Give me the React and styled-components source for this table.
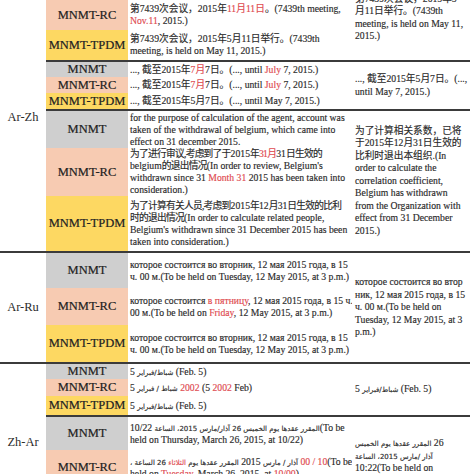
import React from "react";
import styled, { createGlobalStyle } from "styled-components";

const GlobalStyle = createGlobalStyle`
  html, body {
    margin: 0;
    padding: 0;
    background: #fff;
  }
  body {
    width: 474px;
    height: 474px;
    overflow: hidden;
    font-family: "Liberation Serif", "Noto Sans CJK SC", "DejaVu Sans", serif;
  }
`;

const Table = styled.div`
  width: 470px;
  margin-top: -16px;
  display: flex;
  flex-direction: column;
`;

const Group = styled.section`
  display: flex;
  border-bottom: 2px solid #3b3b3b;
`;

const Lang = styled.div`
  width: 46px;
  flex: none;
  display: flex;
  align-items: center;
  justify-content: center;
  font-size: 12.5px;
  color: #2b2b2b;
`;

const Subs = styled.div`
  flex: 1;
  display: flex;
  flex-direction: column;
`;

const Sub = styled.div`
  display: grid;
  grid-template-columns: 82px 224px 1fr;
  grid-template-rows: ${(p) => p.$rows};
  &:not(:last-child) {
    border-bottom: 2px solid #3b3b3b;
  }
`;

const tones = {
  gray: "#cfcfcf",
  peach: "#f7cbb2",
  yellow: "#fdd862",
};

const Label = styled.div`
  grid-column: 1;
  grid-row: ${(p) => p.$row};
  background: ${(p) => tones[p.$tone]};
  display: flex;
  align-items: center;
  justify-content: center;
  font-size: 12.5px;
  color: #222;
  -webkit-text-stroke: 0.2px #222;
  overflow: hidden;
`;

const Text = styled.div`
  grid-column: 2;
  grid-row: ${(p) => p.$row};
  padding-left: 2px;
  display: flex;
  flex-direction: column;
  justify-content: center;
  font-size: 9.7px;
  line-height: 12px;
  color: #2a2a2a;
  -webkit-text-stroke: 0.15px currentColor;
  white-space: nowrap;
  overflow: hidden;
`;

const Ref = styled.div`
  grid-column: 3;
  grid-row: 1 / -1;
  padding: 0 0 ${(p) => p.$lift || 0}px 3px;
  display: flex;
  flex-direction: column;
  justify-content: center;
  font-size: 9.7px;
  line-height: 12.5px;
  color: #2a2a2a;
  -webkit-text-stroke: 0.15px currentColor;
  white-space: nowrap;
  overflow: hidden;
`;

const Line = styled.span`
  display: block;
  height: ${(p) => (p.$ref ? "12.5px" : "12px")};
`;

const R = styled.span`
  color: #e04a50;
`;

const Ar = styled.span`
  direction: rtl;
  unicode-bidi: isolate;
  font-family: "DejaVu Sans", sans-serif;
  font-size: 7px;
  line-height: 1;
`;

const Zh = styled.span`
  letter-spacing: -0.7px;
`;

const tonesFor = ["gray", "peach", "yellow"];
const names = ["MNMT", "MNMT-RC", "MNMT-TPDM"];

const groups = [
  {
    lang: "Ar-Zh",
    subs: [
      {
        heights: [16, 30, 30],
        lift: 9,
        rows: [
          [<>meeting, is held on May 11, 2015.)</>],
          [
            <>第7439次会议，2015年<R>11月11日</R>。(7439th meeting,</>,
            <><R>Nov.11</R>, 2015.)</>,
          ],
          [
            <>第7439次会议，2015年5月11日举行。(7439th</>,
            <>meeting, is held on May 11, 2015.)</>,
          ],
        ],
        ref: [
          <>第7439次会议，2015年5</>,
          <>月11日举行。(7439th</>,
          <>meeting, is held on May 11,</>,
          <>2015.)</>,
        ],
      },
      {
        heights: [15, 16, 16],
        rows: [
          [<>..., 截至2015年<R>7月</R>7日。(..., until <R>July</R> 7, 2015.)</>],
          [<>..., 截至2015年<R>7月</R>7日。(..., until <R>July</R> 7, 2015.)</>],
          [<>..., 截至2015年5月7日。(..., until May 7, 2015.)</>],
        ],
        ref: [<>..., 截至2015年5月7日。(...,</>, <>until May 7, 2015.)</>],
      },
      {
        heights: [37, 48, 55],
        rows: [
          [
            <>for the purpose of calculation of the agent, account was</>,
            <>taken of the withdrawal of belgium, which came into</>,
            <>effect on 31 december 2015.</>,
          ],
          [
            <><Zh>为了进行审议,考虑到了于</Zh>2015<Zh>年<R>31月</R></Zh>31<Zh>日生效的</Zh></>,
            <>belgium<Zh>的退出情况</Zh>(In order to review, Belgium's</>,
            <>withdrawn since 31 <R>Month 31</R> 2015 has been taken into</>,
            <>consideration.)</>,
          ],
          [
            <><Zh>为了计算有关人员,考虑到</Zh>2015<Zh>年</Zh>12<Zh>月</Zh>31<Zh>日生效的比利</Zh></>,
            <><Zh>时的退出情况</Zh>(In order to calculate related people,</>,
            <>Belgium's withdrawn since 31 December 2015 has been</>,
            <>taken into consideration.)</>,
          ],
        ],
        ref: [
          <>为了计算相关系数，已将</>,
          <>于2015年12月31日生效的</>,
          <>比利时退出本组织.(In</>,
          <>order to calculate the</>,
          <>correlation coefficient,</>,
          <>Belgium has withdrawn</>,
          <>from the Organization with</>,
          <>effect from 31 December</>,
          <>2015.)</>,
        ],
      },
    ],
  },
  {
    lang: "Ar-Ru",
    subs: [
      {
        heights: [35, 37, 37],
        rows: [
          [
            <>которое состоится во вторник, 12 мая 2015 года, в 15</>,
            <>ч. 00 м.(To be held on Tuesday, 12 May 2015, at 3 p.m.)</>,
          ],
          [
            <>которое состоится <R>в пятницу</R>, 12 мая 2015 года, в 15 ч.</>,
            <>00 м.(To be held on <R>Friday</R>, 12 May 2015, at 3 p.m.)</>,
          ],
          [
            <>которое состоится во вторник, 12 мая 2015 года, в 15</>,
            <>ч. 00 м.(To be held on Tuesday, 12 May 2015, at 3 p.m.)</>,
          ],
        ],
        ref: [
          <>которое состоится во втор</>,
          <>ник, 12 мая 2015 года, в 15</>,
          <>ч. 00 м.(To be held on</>,
          <>Tuesday, 12 May 2015, at 3</>,
          <>p.m.)</>,
        ],
      },
    ],
  },
  {
    lang: "Zh-Ar",
    subs: [
      {
        heights: [15, 17, 19],
        rows: [
          [<>5 <Ar>شباط/فبراير</Ar> (Feb. 5)</>],
          [
            <>5 <Ar>شباط / فبراير</Ar> <R>2002</R> (5 <R>2002</R> Feb)</>,
          ],
          [<>5 <Ar>شباط/فبراير</Ar> (Feb. 5)</>],
        ],
        ref: [<>5 <Ar>شباط/فبراير</Ar> (Feb. 5)</>],
      },
      {
        heights: [33, 35, 35],
        rows: [
          [
            <>10/22 <Ar>المقرر عقدها يوم الخميس 26 آذار/مارس 2015، الساعة</Ar>(To be</>,
            <>held on Thursday, March 26, 2015, at 10/22)</>,
          ],
          [
            <><Ar>المقرر عقدها يوم <R>الثلاثاء</R> 26 الساعة ،</Ar> 2015 <Ar>آذار / مارس</Ar> <R>00 / 10</R>(To be</>,
            <>held on <R>Tuesday</R>, March 26, 2015, at <R>10/00</R>)</>,
          ],
          [
            <>10/22 <Ar>المقرر عقدها يوم الخميس 26 آذار/مارس 2015، الساعة</Ar>(To be</>,
            <>held on Thursday, March 26, 2015, at 10/22)</>,
          ],
        ],
        ref: [
          <><Ar>المقرر عقدها يوم الخميس</Ar> 26</>,
          <><Ar>آذار /مارس 2015، الساعة</Ar></>,
          <>10:22(To be held on</>,
          <>Thursday, March 26, 2015, at</>,
          <>10:22)</>,
        ],
      },
    ],
  },
];

const App = () => {
  return (
    <>
      <GlobalStyle />
      <Table>
        {groups.map((g) => (
          <Group key={g.lang}>
            <Lang>{g.lang}</Lang>
            <Subs>
              {g.subs.map((s, si) => (
                <Sub key={si} $rows={s.heights.map((h) => h + "px").join(" ")}>
                  {s.rows.map((lines, ri) => (
                    <React.Fragment key={ri}>
                      <Label $row={ri + 1} $tone={tonesFor[ri]}>
                        {names[ri]}
                      </Label>
                      <Text $row={ri + 1}>
                        {lines.map((l, li) => (
                          <Line key={li}>{l}</Line>
                        ))}
                      </Text>
                    </React.Fragment>
                  ))}
                  <Ref $lift={s.lift}>
                    {s.ref.map((l, li) => (
                      <Line key={li} $ref>
                        {l}
                      </Line>
                    ))}
                  </Ref>
                </Sub>
              ))}
            </Subs>
          </Group>
        ))}
      </Table>
    </>
  );
};

export default App;
